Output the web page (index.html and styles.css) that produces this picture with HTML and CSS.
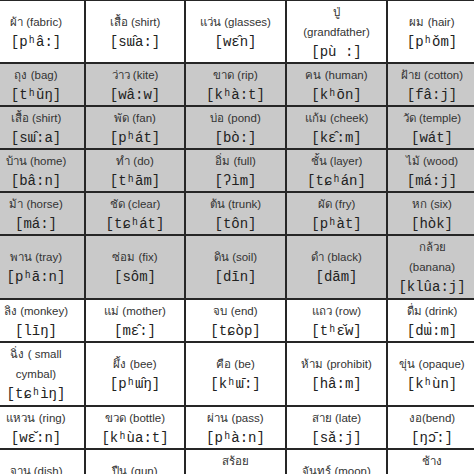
FILE: index.html
```html
<!DOCTYPE html>
<html>
<head>
<meta charset="utf-8">
<link rel="stylesheet" href="styles.css">
</head>
<body>
<table class="grid">
  <colgroup>
    <col class="c1"><col class="c2"><col class="c3"><col class="c4"><col class="c5">
  </colgroup>
  <tr class="r-first white">
    <td><div class="g">ผ้า (fabric)</div><div class="p">[pʰâ:]</div></td>
    <td><div class="g">เสื้อ (shirt)</div><div class="p">[sɯ̂a:]</div></td>
    <td><div class="g">แว่น (glasses)</div><div class="p">[wɛ̂n]</div></td>
    <td><div class="g">ปู่</div><div class="g">(grandfather)</div><div class="p">[pù :]</div></td>
    <td><div class="g">ผม (hair)</div><div class="p">[pʰǒm]</div></td>
  </tr>
  <tr class="r-norm gray">
    <td><div class="g">ถุง (bag)</div><div class="p">[tʰǔŋ]</div></td>
    <td><div class="g">ว่าว (kite)</div><div class="p">[wâ:w]</div></td>
    <td><div class="g">ขาด (rip)</div><div class="p">[kʰà:t]</div></td>
    <td><div class="g">คน (human)</div><div class="p">[kʰōn]</div></td>
    <td><div class="g">ฝ้าย (cotton)</div><div class="p">[fâ:j]</div></td>
  </tr>
  <tr class="r-norm gray">
    <td><div class="g">เสื้อ (shirt)</div><div class="p">[sɯ̂:a]</div></td>
    <td><div class="g">พัด (fan)</div><div class="p">[pʰát]</div></td>
    <td><div class="g">บ่อ (pond)</div><div class="p">[bò:]</div></td>
    <td><div class="g">แก้ม (cheek)</div><div class="p">[kɛ̂:m]</div></td>
    <td><div class="g">วัด (temple)</div><div class="p">[wát]</div></td>
  </tr>
  <tr class="r-norm gray">
    <td><div class="g">บ้าน (home)</div><div class="p">[bâ:n]</div></td>
    <td><div class="g">ทำ (do)</div><div class="p">[tʰām]</div></td>
    <td><div class="g">อิ่ม (full)</div><div class="p">[ʔìm]</div></td>
    <td><div class="g">ชั้น (layer)</div><div class="p">[tɕʰán]</div></td>
    <td><div class="g">ไม้ (wood)</div><div class="p">[má:j]</div></td>
  </tr>
  <tr class="r-norm gray">
    <td><div class="g">ม้า (horse)</div><div class="p">[má:]</div></td>
    <td><div class="g">ชัด (clear)</div><div class="p">[tɕʰát]</div></td>
    <td><div class="g">ต้น (trunk)</div><div class="p">[tôn]</div></td>
    <td><div class="g">ผัด (fry)</div><div class="p">[pʰàt]</div></td>
    <td><div class="g">หก (six)</div><div class="p">[hòk]</div></td>
  </tr>
  <tr class="r-tall gray">
    <td><div class="g">พาน (tray)</div><div class="p">[pʰā:n]</div></td>
    <td><div class="g">ซ่อม (fix)</div><div class="p">[sôm]</div></td>
    <td><div class="g">ดิน (soil)</div><div class="p">[dīn]</div></td>
    <td><div class="g">ดำ (black)</div><div class="p">[dām]</div></td>
    <td><div class="g">กล้วย</div><div class="g">(banana)</div><div class="p">[klûa:j]</div></td>
  </tr>
  <tr class="r-norm white">
    <td><div class="g">ลิง (monkey)</div><div class="p">[līŋ]</div></td>
    <td><div class="g">แม่ (mother)</div><div class="p">[mɛ̂:]</div></td>
    <td><div class="g">จบ (end)</div><div class="p">[tɕòp]</div></td>
    <td><div class="g">แถว (row)</div><div class="p">[tʰɛ̌w]</div></td>
    <td><div class="g">ดื่ม (drink)</div><div class="p">[dɯ̀:m]</div></td>
  </tr>
  <tr class="r-tall white">
    <td><div class="g">ฉิ่ง ( small</div><div class="g">cymbal)</div><div class="p">[tɕʰìŋ]</div></td>
    <td><div class="g">ผึ้ง (bee)</div><div class="p">[pʰɯ̂ŋ]</div></td>
    <td><div class="g">คือ (be)</div><div class="p">[kʰɯ̄:]</div></td>
    <td><div class="g">ห้าม (prohibit)</div><div class="p">[hâ:m]</div></td>
    <td><div class="g">ขุ่น (opaque)</div><div class="p">[kʰùn]</div></td>
  </tr>
  <tr class="r-norm white">
    <td><div class="g">แหวน (ring)</div><div class="p">[wɛ̌:n]</div></td>
    <td><div class="g">ขวด (bottle)</div><div class="p">[kʰùa:t]</div></td>
    <td><div class="g">ผ่าน (pass)</div><div class="p">[pʰà:n]</div></td>
    <td><div class="g">สาย (late)</div><div class="p">[sǎ:j]</div></td>
    <td><div class="g">งอ(bend)</div><div class="p">[ŋɔ̄:]</div></td>
  </tr>
  <tr class="r-tall white">
    <td><div class="g">จาน (dish)</div><div class="p">[tɕā:n]</div></td>
    <td><div class="g">ปืน (gun)</div><div class="p">[pɯ̄:n]</div></td>
    <td><div class="g">สร้อย</div><div class="g">(necklace)</div><div class="p">[sɔ̂j]</div></td>
    <td><div class="g">จันทร์ (moon)</div><div class="p">[tɕān]</div></td>
    <td><div class="g">ช้าง</div><div class="g">(elephant)</div><div class="p">[tɕʰá:ŋ]</div></td>
  </tr>
</table>
</body>
</html>
```
FILE: styles.css
```css
html, body {
  margin: 0;
  padding: 0;
  background: #ffffff;
  overflow: hidden;
}
body {
  width: 474px;
  height: 474px;
}
.grid {
  border-collapse: collapse;
  margin-left: -14px;
  margin-top: -1px;
  table-layout: fixed;
  width: 490px;
}
.c1 { width: 98px; }
.c2 { width: 100px; }
.c3 { width: 101px; }
.c4 { width: 101px; }
.c5 { width: 90px; }
.grid td {
  border: 2px solid #262626;
  padding: 0;
  text-align: center;
  vertical-align: middle;
  white-space: nowrap;
}
.white td { background: #ffffff; }
.gray td { background: #c9c9c9; }
.r-first { height: 63px; }
.r-norm { height: 43px; }
.r-tall { height: 64px; }
.g {
  font-family: "Liberation Sans", "Noto Sans", sans-serif;
  font-size: 11.5px;
  line-height: 20px;
  color: #333333;
}
.p {
  font-family: "Liberation Mono", "DejaVu Sans Mono", monospace;
  font-size: 14px;
  line-height: 20px;
  color: #222222;
}
```
